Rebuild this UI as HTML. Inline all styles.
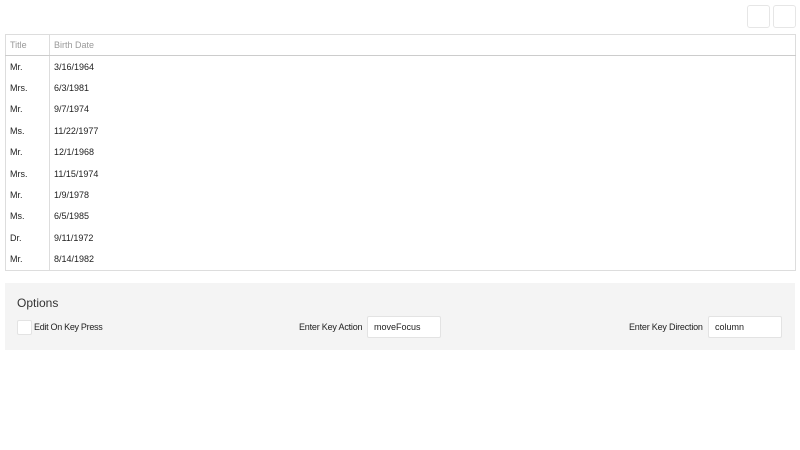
<!DOCTYPE html>
<html><head><style>
body{margin:0;width:800px;height:450px;background:#fff;font-family:"Liberation Sans",sans-serif;font-size:9px;color:#222;position:relative;overflow:hidden}
.a{position:absolute}
.btn{top:5px;width:21px;height:21px;border:1px solid #e6e6e6;border-radius:3px;background:#fff}
table{position:absolute;left:5px;top:34px;width:791px;border-collapse:collapse;border:1px solid #ddd}
td{height:21.4px;padding:0 0 0 4px;border-left:1px solid #ddd}
td:first-child{width:39px;border-left:none}
tr.h td{height:20px;color:#999;border-bottom:1px solid #ccc}
.opt{left:5px;top:283px;width:790px;height:67px;background:#f4f4f4}
.inp{background:#fff;border:1px solid #e3e3e3;border-radius:2px;line-height:20px;padding-left:6px;box-sizing:border-box;width:74px;height:22px}
</style></head><body>
<div class="a btn" style="left:747px"></div>
<div class="a btn" style="left:773px"></div>
<table>
<tr class="h"><td>Title</td><td>Birth Date</td></tr>
<tr><td>Mr.</td><td>3/16/1964</td></tr>
<tr><td>Mrs.</td><td>6/3/1981</td></tr>
<tr><td>Mr.</td><td>9/7/1974</td></tr>
<tr><td>Ms.</td><td>11/22/1977</td></tr>
<tr><td>Mr.</td><td>12/1/1968</td></tr>
<tr><td>Mrs.</td><td>11/15/1974</td></tr>
<tr><td>Mr.</td><td>1/9/1978</td></tr>
<tr><td>Ms.</td><td>6/5/1985</td></tr>
<tr><td>Dr.</td><td>9/11/1972</td></tr>
<tr><td>Mr.</td><td>8/14/1982</td></tr>
</table>
<div class="a opt">
<div class="a" style="left:12px;top:13px;font-size:12px;color:#333">Options</div>
<div class="a" style="left:12px;top:37px;width:13px;height:13px;background:#fff;border:1px solid #e3e3e3;border-radius:2px"></div>
<div class="a" style="left:29px;top:39px;letter-spacing:-0.3px">Edit On Key Press</div>
<div class="a" style="left:294px;top:39px;letter-spacing:-0.2px">Enter Key Action</div>
<div class="a inp" style="left:362px;top:33px">moveFocus</div>
<div class="a" style="left:624px;top:39px;letter-spacing:-0.2px">Enter Key Direction</div>
<div class="a inp" style="left:703px;top:33px">column</div>
</div>
</body></html>
